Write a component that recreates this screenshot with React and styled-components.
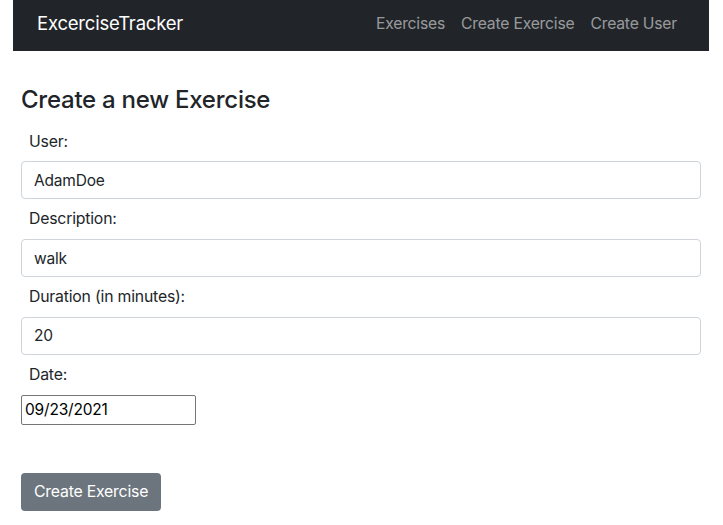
import React from 'react';
import styled, { createGlobalStyle } from 'styled-components';

const GlobalStyle = createGlobalStyle`
  body {
    margin: 0;
    background: #fff;
    color: #212529;
    font-family: Inter, "Liberation Sans", sans-serif;
    font-size: 16px;
    line-height: 1.5;
  }
  * {
    box-sizing: border-box;
  }
`;

const Page = styled.div`
  width: 696px;
  margin: 0 13px;
`;

const Navbar = styled.nav`
  display: flex;
  align-items: center;
  justify-content: space-between;
  height: 51px;
  padding: 0 24px 4px;
  background: #212529;
`;

const Brand = styled.a`
  color: #fff;
  font-size: 18.5px;
  letter-spacing: -0.2px;
  text-decoration: none;
  cursor: pointer;
`;

const NavLinks = styled.ul`
  display: flex;
  margin: 0;
  padding: 0;
  list-style: none;
`;

const NavLink = styled.li`
  padding: 0 8px;
  color: rgba(255, 255, 255, 0.55);
  font-size: 15.7px;
  letter-spacing: -0.2px;
  cursor: pointer;
`;

const Main = styled.main`
  padding: 35px 8px 0;
`;

const Title = styled.h3`
  margin: 0 0 15px;
  font-size: 24px;
  font-weight: 500;
  line-height: 1.2;
  letter-spacing: -0.25px;
`;

const Group = styled.div`
  margin-bottom: ${(p) => p.$gap || 8}px;
`;

const Label = styled.label`
  display: block;
  padding-left: 8px;
  margin-bottom: 8px;
  font-size: 15.8px;
  letter-spacing: -0.2px;
`;

const Input = styled.input`
  display: block;
  width: 100%;
  height: 38px;
  padding: 6px 12px;
  border: 1px solid #ced4da;
  border-radius: 4px;
  color: #212529;
  font-family: inherit;
  font-size: 15.5px;
  letter-spacing: -0.2px;
  outline: none;
`;

const DateInput = styled.input`
  display: block;
  width: 175px;
  height: 30px;
  padding: 2px 3px;
  border: 1px solid #767676;
  border-radius: 2px;
  color: #000;
  font-family: inherit;
  font-size: 15.5px;
  letter-spacing: -0.2px;
  outline: none;
`;

const Button = styled.button`
  height: 38px;
  padding: 0 13px;
  border: none;
  border-radius: 4px;
  background: #6c757d;
  color: #fff;
  font-family: inherit;
  font-size: 15.8px;
  letter-spacing: -0.2px;
  cursor: pointer;
`;

const fields = [
  { label: 'User:', value: 'AdamDoe' },
  { label: 'Description:', value: 'walk' },
  { label: 'Duration (in minutes):', value: '20' },
];

function App() {
  return (
    <Page>
      <GlobalStyle />
      <Navbar>
        <Brand>ExcerciseTracker</Brand>
        <NavLinks>
          <NavLink>Exercises</NavLink>
          <NavLink>Create Exercise</NavLink>
          <NavLink>Create User</NavLink>
        </NavLinks>
      </Navbar>
      <Main>
        <Title>Create a new Exercise</Title>
        <form>
          {fields.map((f) => (
            <Group key={f.label}>
              <Label>{f.label}</Label>
              <Input type="text" defaultValue={f.value} />
            </Group>
          ))}
          <Group $gap={48}>
            <Label>Date:</Label>
            <DateInput type="text" defaultValue="09/23/2021" />
          </Group>
          <Button type="button">Create Exercise</Button>
        </form>
      </Main>
    </Page>
  );
}

export default App;
